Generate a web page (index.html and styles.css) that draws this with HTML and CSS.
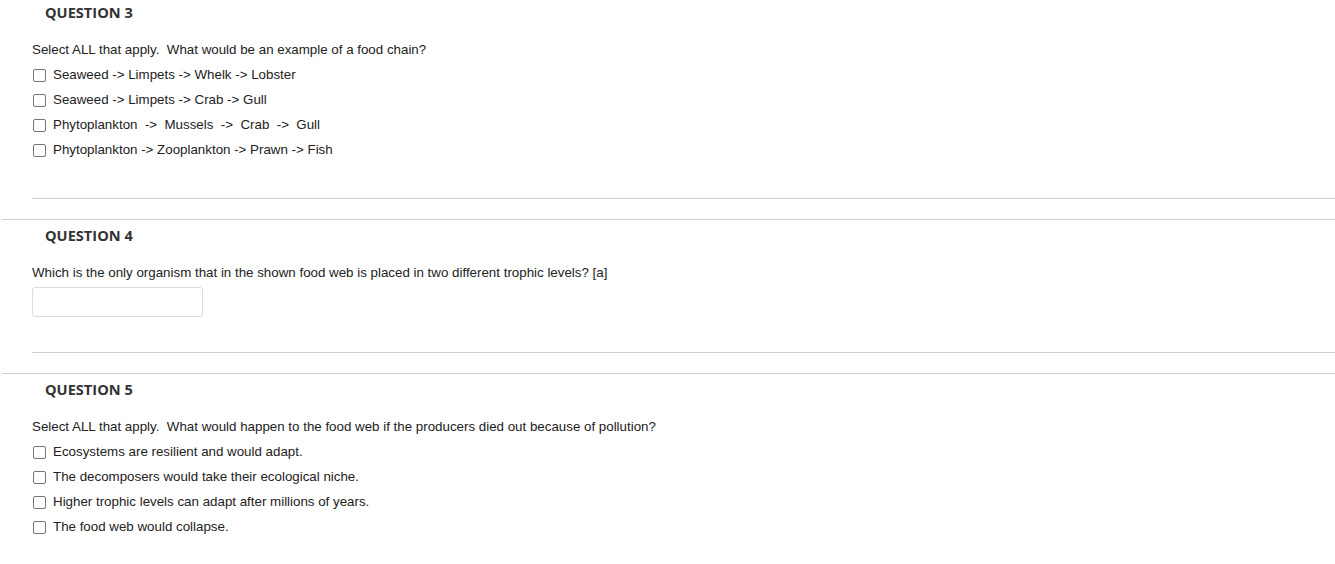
FILE: index.html
```html
<!DOCTYPE html>
<html>
<head>
<meta charset="utf-8">
<link rel="stylesheet" href="styles.css">
</head>
<body>
<div class="page">
  <section class="question first">
    <h2 class="q-title">QUESTION 3</h2>
    <div class="q-body">
      <p class="q-text">Select ALL that apply.&nbsp; What would be an example of a food chain?</p>
      <ul class="options">
        <li><span class="box"></span><span>Seaweed -&gt; Limpets -&gt; Whelk -&gt; Lobster</span></li>
        <li><span class="box"></span><span>Seaweed -&gt; Limpets -&gt; Crab -&gt; Gull</span></li>
        <li><span class="box"></span><span>Phytoplankton &nbsp;-&gt; &nbsp;Mussels &nbsp;-&gt; &nbsp;Crab &nbsp;-&gt; &nbsp;Gull</span></li>
        <li><span class="box"></span><span>Phytoplankton -&gt; Zooplankton -&gt; Prawn -&gt; Fish</span></li>
      </ul>
    </div>
  </section>
  <section class="question">
    <h2 class="q-title">QUESTION 4</h2>
    <div class="q-body short">
      <p class="q-text">Which is the only organism that in the shown food web is placed in two different trophic levels? [a]</p>
      <div class="answer"></div>
    </div>
  </section>
  <section class="question">
    <h2 class="q-title">QUESTION 5</h2>
    <div class="q-body last">
      <p class="q-text">Select ALL that apply.&nbsp; What would happen to the food web if the producers died out because of pollution?</p>
      <ul class="options">
        <li><span class="box"></span><span>Ecosystems are resilient and would adapt.</span></li>
        <li><span class="box"></span><span>The decomposers would take their ecological niche.</span></li>
        <li><span class="box"></span><span>Higher trophic levels can adapt after millions of years.</span></li>
        <li><span class="box"></span><span>The food web would collapse.</span></li>
      </ul>
    </div>
  </section>
</div>
</body>
</html>
```
FILE: styles.css
```css
html, body {
  margin: 0;
  padding: 0;
  background: #fff;
}
body {
  font-family: "Liberation Sans", Arial, sans-serif;
  font-size: 13.33px;
  color: #222;
}
.page {
  padding-left: 2px;
}
.question {
  border-top: 1px solid #cfcfcf;
  padding-top: 5px;
}
.question.first {
  border-top: none;
  margin-top: -3px;
}
.q-title {
  margin: 0;
  padding-left: 43px;
  font-family: "Open Sans", sans-serif;
  font-weight: 700;
  font-size: 14.6px;
  line-height: 20px;
  color: #333;
}
.q-body {
  margin-left: 30px;
  border-bottom: 1px solid #cfcfcf;
  margin-bottom: 20px;
  padding-top: 20px;
  padding-bottom: 40px;
}
.q-body.short {
  padding-bottom: 35px;
}
.q-body.last {
  border-bottom: none;
  margin-bottom: 0;
  padding-bottom: 20px;
}
.q-text {
  margin: 0 0 9px;
  line-height: 16px;
}
.options {
  list-style: none;
  margin: 0;
  padding: 0;
  display: flex;
  flex-direction: column;
  gap: 9px;
}
.options li {
  display: flex;
  align-items: center;
  gap: 7px;
  line-height: 16px;
  padding-left: 1px;
}
.box {
  width: 11px;
  height: 11px;
  border: 1px solid #767676;
  border-radius: 2px;
  background: #fff;
  flex: none;
}
.answer {
  width: 169px;
  height: 28px;
  border: 1px solid #dcdcdc;
  border-radius: 3px;
  margin-top: -3px;
}
```
